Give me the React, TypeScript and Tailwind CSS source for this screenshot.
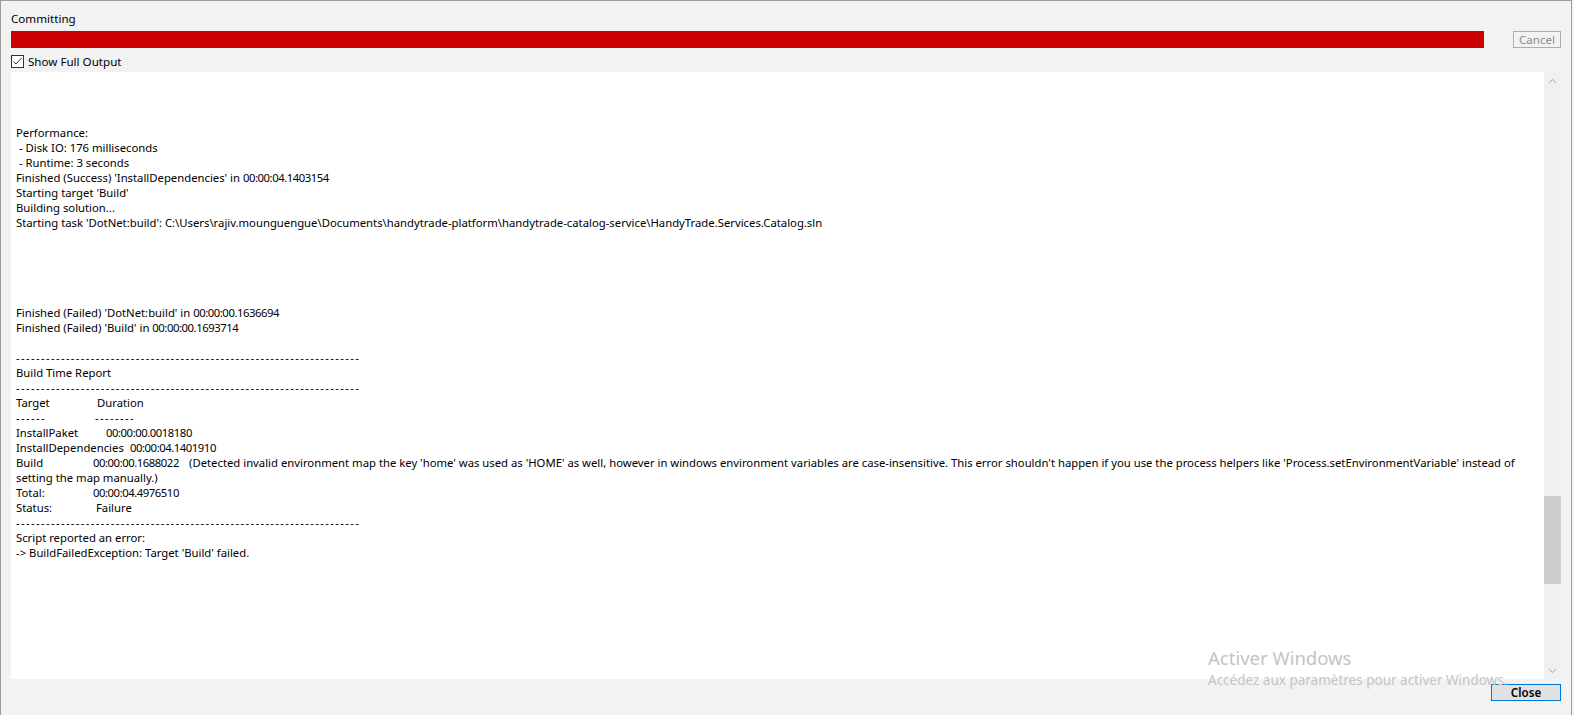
import React from "react";

const dashes = "---------------------------------------------------------------------";

const Time = ({ children, className = "" }: { children: React.ReactNode; className?: string }) => (
  <span className={`tracking-[-0.45px] ${className}`}>{children}</span>
);

const Row = ({ label, width, value }: { label: React.ReactNode; width: string; value: React.ReactNode }) => (
  <div className="h-[15px] whitespace-pre">
    <span className={`inline-block ${width}`}>{label}</span>
    {value}
  </div>
);

const Chevron = ({ up }: { up?: boolean }) => (
  <svg width="9" height="6" viewBox="0 0 9 6" className="block">
    <polyline
      points={up ? "1,5 4.5,1.5 8,5" : "1,1 4.5,4.5 8,1"}
      fill="none"
      stroke="#a6a6a6"
      strokeWidth="1"
    />
  </svg>
);

const Dashes = ({ text }: { text: string }) => <span className="tracking-[1.35px]">{text}</span>;

const logTop: React.ReactNode[] = [
  "",
  "",
  "",
  "Performance:",
  " - Disk IO: 176 milliseconds",
  " - Runtime: 3 seconds",
  <>
    Finished (Success) 'InstallDependencies' in <Time>00:00:04.1403154</Time>
  </>,
  "Starting target 'Build'",
  "Building solution...",
  "Starting task 'DotNet:build': C:\\Users\\rajiv.mounguengue\\Documents\\handytrade-platform\\handytrade-catalog-service\\HandyTrade.Services.Catalog.sln",
  "",
  "",
  "",
  "",
  "",
  <>
    Finished (Failed) 'DotNet:build' in <Time>00:00:00.1636694</Time>
  </>,
  <>
    Finished (Failed) 'Build' in <Time>00:00:00.1693714</Time>
  </>,
  "",
  <Dashes text={dashes} />,
  "Build Time Report",
  <Dashes text={dashes} />,
];

export default function App() {
  return (
    <div className="h-[715px] w-full bg-[#f3f3f3] flex font-['Noto_Sans','Segoe_UI',sans-serif] text-[11.3px] text-black">
      <div className="relative w-[1572px] h-full border-l border-t border-r border-[#9c9c9c] bg-[#f2f2f2] flex flex-col pl-[10px] pr-[10px] pt-[10px]">
        <div className="h-[15px] leading-[15px] text-[11.6px]">Committing</div>

        <div className="mt-[5px] flex items-center gap-[29px]">
          <div className="flex-1 h-[17px] bg-[#cc0000]" />
          <button className="w-[48px] h-[17px] border border-[#adadad] bg-[#f2f2f2] text-[#8a8a8a] text-[11.6px] leading-[15px]">
            Cancel
          </button>
        </div>

        <div className="mt-[6px] h-[15px] flex items-center gap-[4px] leading-[15px] text-[11.6px]">
          <svg width="13" height="13" viewBox="0 0 13 13" className="block">
            <rect x="0.5" y="0.5" width="12" height="12" fill="#fff" stroke="#333" />
            <polyline points="2.5,6.5 5,9 10.5,3" fill="none" stroke="#333" strokeWidth="1" />
          </svg>
          <span>Show Full Output</span>
        </div>

        <div className="mt-[3px] h-[607px] flex bg-white">
          <div className="flex-1 overflow-hidden pl-[5px] pt-[8px] leading-[15px] whitespace-pre">
            {logTop.map((l, i) => (
              <div key={i} className="h-[15px]">
                {l}
              </div>
            ))}
            <Row label="Target" width="w-[81px]" value="Duration" />
            <Row label={<Dashes text="------" />} width="w-[79px]" value={<Dashes text="--------" />} />
            <Row label="InstallPaket" width="w-[90px]" value={<Time>00:00:00.0018180</Time>} />
            <Row label="InstallDependencies" width="w-[114px]" value={<Time>00:00:04.1401910</Time>} />
            <Row
              label="Build"
              width="w-[77px]"
              value={
                <>
                  <Time className="inline-block w-[96px]">00:00:00.1688022</Time>
                  (Detected invalid environment map the key 'home' was used as 'HOME' as well, however in windows environment
                  variables are case-insensitive. This error shouldn't happen if you use the process helpers like
                  'Process.setEnvironmentVariable' instead of
                </>
              }
            />
            <div className="h-[15px]">setting the map manually.)</div>
            <Row label="Total:" width="w-[77px]" value={<Time>00:00:04.4976510</Time>} />
            <Row label="Status:" width="w-[80px]" value="Failure" />
            <div className="h-[15px]">
              <Dashes text={dashes} />
            </div>
            <div className="h-[15px]">Script reported an error:</div>
            <div className="h-[15px]">-&gt; BuildFailedException: Target 'Build' failed.</div>
          </div>

          <div className="w-[17px] h-full bg-[#f0f0f0] flex flex-col">
            <div className="h-[17px] flex items-center justify-center">
              <Chevron up />
            </div>
            <div className="flex-1">
              <div className="mt-[407px] h-[88px] bg-[#cdcdcd]" />
            </div>
            <div className="h-[17px] flex items-center justify-center">
              <Chevron />
            </div>
          </div>
        </div>

        <div className="mt-[5px] flex justify-end">
          <button className="w-[70px] h-[17px] border border-[#0078d7] bg-[#e1e1e1] text-[11.6px] leading-[15px] font-semibold">
            Close
          </button>
        </div>

        <div className="absolute left-[1207px] top-[646px] text-[#c4c4c4] pointer-events-none">
          <div className="text-[18.5px] leading-[22px]">Activer Windows</div>
          <div className="mt-[2px] text-[13.5px] leading-[18px]">Accédez aux paramètres pour activer Windows.</div>
        </div>
      </div>
    </div>
  );
}
